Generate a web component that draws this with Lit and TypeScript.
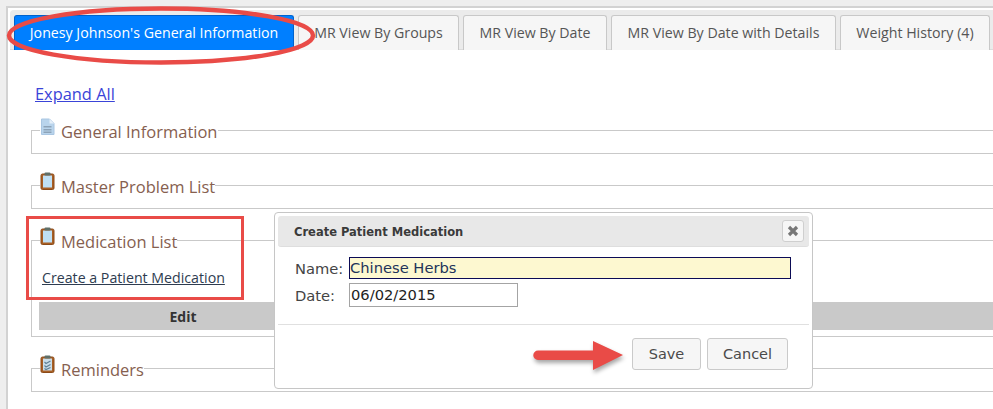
import { LitElement, html, css, svg } from "lit";
import { customElement } from "lit/decorators.js";

const docIcon = html`<svg class="ico" width="15" height="20" viewBox="0 0 15 20"><path d="M1.500 2h8l4.500 4.500V17.500H1.500z" fill="#b9d4ec" stroke="#a9c6e2"/><path d="M9.500 2v4.500H14z" fill="#e6f0f9"/><rect x="3.500" y="9" width="8" height="1.500" fill="#8da3b8"/><rect x="3.500" y="12" width="8" height="1.500" fill="#8da3b8"/><rect x="3.500" y="14.500" width="8" height="1.500" fill="#8da3b8"/></svg>`;
const clipIcon = (check = false) => html`<svg class="ico" width="15" height="20" viewBox="0 0 15 20"><rect x="1" y="2" width="13" height="15.500" rx="1.500" fill="#a85f24" stroke="#8b4a18"/><rect x="3" y="3.500" width="9" height="12" fill="${check ? "#c9dde9" : "#bfe0f5"}"/><rect x="4.500" y="0.500" width="6" height="3" rx="1" fill="#5f6f68"/>${check
  ? svg`<path d="M4.500 7l1.500 1.500L10.500 6M4.500 10.500l1.500 1.500 4.500-2.500M4.500 13.500l1.500 1 4.500-2" fill="none" stroke="#5d7f95" stroke-width="1.100"/>`
  : ""}</svg>`;

@customElement("app-root")
export class AppRoot extends LitElement {
  static styles = css`
    :host { display: block; position: relative; width: 993px; height: 409px; overflow: hidden; background: #eeeeee; font-family: "Open Sans", sans-serif; }
    .panel { margin: 6px 0 0 6px; height: 403px; box-sizing: border-box; background: #fff; border-top: 2px solid #d2d2d2; border-left: 2px solid #d2d2d2; padding: 2px 0 0 2px; }
    .tabs { display: flex; gap: 4px; height: 40px; box-sizing: border-box; padding: 5px 0 0 4px; background: #ebebeb; border-radius: 4px 0 0 0; border-bottom: 1px solid #dcdcdc; white-space: nowrap; }
    .tab { box-sizing: border-box; height: 35px; line-height: 34px; font-size: 14.2px; color: #555; background: #f6f6f6; border: 1px solid #c8c8c8; border-bottom: none; border-radius: 3px 3px 0 0; text-align: center; flex: none; }
    .tab.active { background: #007fff; border-color: #0062cc; color: #fff; }
    .content { padding: 32px 0 0 21px; }
    .expand { display: block; font-size: 16.4px; line-height: 24px; height: 24px; color: #3a44d8; text-decoration: underline; margin: 0 0 11px 4px; }
    fieldset { margin: 0 0 18px; padding: 0 0 10px; border: none; border-top: 1px solid #c9c9c9; border-left: 1px solid #c9c9c9; border-bottom: 1px solid #c9c9c9; min-width: 0; }
    fieldset.open { padding-bottom: 0; }
    legend { margin-left: 8px; padding: 0; height: 26px; line-height: 26px; font-size: 16.5px; color: #86604f; display: flex; align-items: center; gap: 6px; white-space: nowrap; }
    .label { margin-top: 3px; }
    .ico { margin-top: -6px; flex: none; }
    .body { padding: 0 0 6px 7px; }
    .create { margin-left: 3px; height: 49px; padding-top: 13px; box-sizing: border-box; font-size: 14.2px; line-height: 24px; }
    .create a { color: #2e3c50; text-decoration: underline; }
    .bar { height: 28px; background: #c9c9c9; display: grid; grid-template-columns: 288px 1fr; line-height: 29px; font-size: 14px; font-weight: 700; color: #333; text-align: center; }
    .ellipse, .arrow { position: absolute; pointer-events: none; }
    .ellipse { left: 0; top: 0; }
    .box { position: absolute; left: 26px; top: 216px; width: 218px; height: 84px; box-sizing: border-box; border: 3px solid #e94b47; }
    .dialog { position: absolute; left: 274px; top: 212px; width: 539px; height: 177px; box-sizing: border-box; background: #fff; border: 1px solid #c6c6c6; border-radius: 4px; padding: 3px; font-family: "DejaVu Sans", sans-serif; }
    .dhead { height: 31px; background: #e8e8e8; border-radius: 3px; display: flex; align-items: center; justify-content: space-between; padding: 2px 5px 0 16px; border-bottom: 1px solid #dedede; box-sizing: border-box; font-size: 11.5px; font-weight: 700; color: #3a3a3a; }
    .close { width: 22px; height: 22px; margin-top: -2px; box-sizing: border-box; display: flex; align-items: center; justify-content: center; background: #f6f6f6; border: 1px solid #cfcfcf; border-radius: 3px; }
    .form { display: grid; grid-template-columns: 54px auto; justify-content: start; row-gap: 4px; padding: 10px 0 0 17px; font-size: 14.7px; color: #444; align-items: center; height: 78px; box-sizing: border-box; align-content: start; border-bottom: 1px solid #e0e0e0; }
    .field { box-sizing: border-box; height: 22px; width: 442px; line-height: 20px; background: #fdf8d0; border: 1px solid #0b0b55; color: #22335a; }
    .field.date { height: 24px; width: 169px; line-height: 22px; padding-left: 1px; background: #fff; border: 1px solid #a4a4a4; color: #222; }
    .actions { display: flex; justify-content: flex-end; gap: 6px; padding: 13px 21px 0 0; }
    .btn { box-sizing: border-box; height: 32px; line-height: 30px; text-align: center; font-size: 14.5px; color: #4a4a4a; background: #f6f6f6; border: 1px solid #cacaca; border-radius: 3px; }
    .save { width: 69px; }
    .cancel { width: 81px; }
    .arrow { left: 530px; top: 336px; filter: drop-shadow(1px 3px 2px rgba(0, 0, 0, 0.35)); }
  `;

  render() {
    const tabs: [string, number][] = [["Jonesy Johnson's General Information", 280], ["MR View By Groups", 161], ["MR View By Date", 144], ["MR View By Date with Details", 225], ["Weight History (4)", 150]];
    return html`
      <div class="panel">
        <div class="tabs">
          ${tabs.map(([t, w], i) => html`<div class="tab ${i === 0 ? "active" : ""}" style="width:${w}px">${t}</div>`)}
        </div>
        <div class="content">
          <a class="expand">Expand All</a>
          <fieldset><legend>${docIcon}<span class="label">General Information</span></legend></fieldset>
          <fieldset><legend>${clipIcon()}<span class="label">Master Problem List</span></legend></fieldset>
          <fieldset class="open">
            <legend>${clipIcon()}<span class="label">Medication List</span></legend>
            <div class="body">
              <div class="create"><a>Create a Patient Medication</a></div>
              <div class="bar"><span>Edit</span><span></span></div>
            </div>
          </fieldset>
          <fieldset><legend>${clipIcon(true)}<span class="label">Reminders</span></legend></fieldset>
        </div>
      </div>
      <svg class="ellipse" width="330" height="72" viewBox="0 0 330 72"><ellipse cx="161" cy="35.5" rx="152" ry="27" fill="none" stroke="#e94b47" stroke-width="4.5"/></svg>
      <div class="box"></div>
      <div class="dialog">
        <div class="dhead"><span>Create Patient Medication</span>
          <span class="close"><svg width="12" height="12" viewBox="0 0 12 12"><path d="M2 2l8 8M10 2l-8 8" stroke="#777" stroke-width="3.2"/></svg></span>
        </div>
        <div class="form">
          <span>Name:</span><div class="field">Chinese Herbs</div>
          <span>Date:</span><div class="field date">06/02/2015</div>
        </div>
        <div class="actions"><div class="btn save">Save</div><div class="btn cancel">Cancel</div></div>
      </div>
      <svg class="arrow" width="100" height="44" viewBox="0 0 100 44">
        <path d="M8 14.5h55V5l30 14-30 15V24H8a4.700 4.700 0 0 1 0-9.500z" fill="#e94b47"/>
      </svg>
    `;
  }
}
